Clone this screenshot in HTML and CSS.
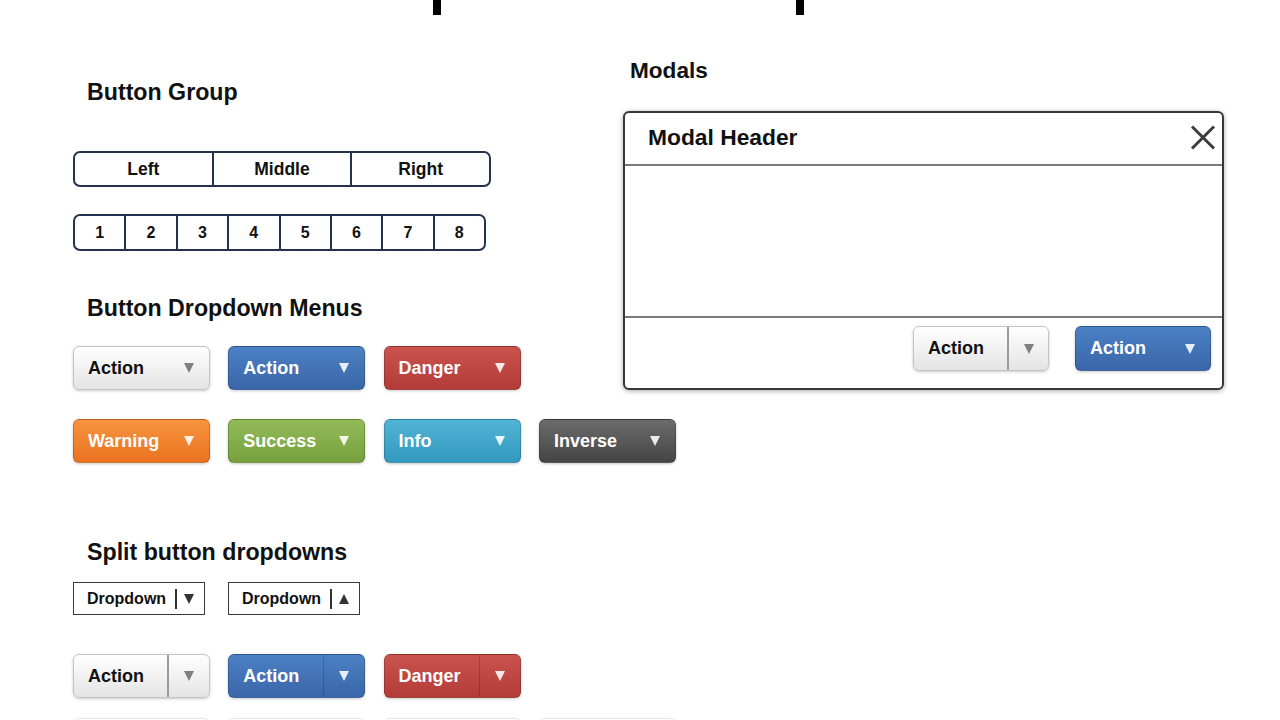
FILE: index.html
```html
<!DOCTYPE html>
<html>
<head>
<meta charset="utf-8">
<link rel="stylesheet" href="styles.css">
</head>
<body>
<div class="topbar"></div>
<div class="page">
  <div class="top">
    <div class="left">
      <h2 class="heading h-group">Button Group</h2>
      <div class="group group-lmr">
        <div class="seg">Left</div>
        <div class="seg">Middle</div>
        <div class="seg">Right</div>
      </div>
      <div class="group group-num">
        <div class="seg">1</div>
        <div class="seg">2</div>
        <div class="seg">3</div>
        <div class="seg">4</div>
        <div class="seg">5</div>
        <div class="seg">6</div>
        <div class="seg">7</div>
        <div class="seg">8</div>
      </div>
      <h2 class="heading h-menus">Button Dropdown Menus</h2>
      <div class="btn-row">
        <div class="btn default"><span>Action</span><i class="caret"></i></div>
        <div class="btn primary"><span>Action</span><i class="caret"></i></div>
        <div class="btn danger"><span>Danger</span><i class="caret"></i></div>
      </div>
    </div>
    <div class="right">
      <h2 class="heading h-modals">Modals</h2>
      <div class="modal">
        <div class="modal-header">
          <span class="modal-title">Modal Header</span>
          <svg class="close" width="26" height="25" viewBox="0 0 26 25"><path d="M2 1.5 L24 23.5 M24 1.5 L2 23.5" stroke="#3c3c3c" stroke-width="3" fill="none"/></svg>
        </div>
        <div class="modal-body"></div>
        <div class="modal-footer">
          <div class="btn default split"><span class="main">Action</span><span class="toggle"><i class="caret"></i></span></div>
          <div class="btn primary"><span>Action</span><i class="caret"></i></div>
        </div>
      </div>
    </div>
  </div>
  <div class="btn-row row2">
    <div class="btn warning"><span>Warning</span><i class="caret"></i></div>
    <div class="btn success"><span>Success</span><i class="caret"></i></div>
    <div class="btn info"><span>Info</span><i class="caret"></i></div>
    <div class="btn inverse"><span>Inverse</span><i class="caret"></i></div>
  </div>
  <h2 class="heading h-split">Split button dropdowns</h2>
  <div class="outline-row">
    <div class="outline"><span>Dropdown</span><span class="bar"></span><i class="caret dark"></i></div>
    <div class="outline"><span>Dropdown</span><span class="bar"></span><i class="caret dark up"></i></div>
  </div>
  <div class="btn-row row-split">
    <div class="btn default split"><span class="main">Action</span><span class="toggle"><i class="caret"></i></span></div>
    <div class="btn primary split"><span class="main">Action</span><span class="toggle"><i class="caret"></i></span></div>
    <div class="btn danger split"><span class="main">Danger</span><span class="toggle"><i class="caret"></i></span></div>
  </div>
  <div class="btn-row row-next">
    <div class="btn default"></div>
    <div class="btn default"></div>
    <div class="btn default"></div>
    <div class="btn default"></div>
  </div>
</div>
</body>
</html>
```
FILE: styles.css
```css
* { box-sizing: border-box; }
html, body { margin: 0; padding: 0; background: #fff; }
body {
  font-family: "Liberation Sans", Arial, sans-serif;
  color: #111;
  width: 1280px;
  height: 720px;
  overflow: hidden;
}
.topbar {
  margin-left: 433px;
  width: 371px;
  height: 15px;
  border-left: 8px solid #000;
  border-right: 8px solid #000;
}
.page { padding-left: 73px; }
.top { display: flex; }
.left { width: 550px; }
.right { width: 601px; }

.heading {
  margin: 0;
  font-size: 23.2px;
  font-weight: bold;
  line-height: 28px;
  height: 28px;
  color: #111;
  margin-left: 14px;
}
.h-group { margin-top: 63px; }
.h-menus { margin-top: 43px; }
.h-modals { margin-top: 42px; margin-left: 7px; font-size: 22.6px; }
.h-split { margin-top: 75px; }

.group {
  display: flex;
  border: 2px solid #24324d;
  border-radius: 7px;
  font-weight: bold;
  color: #111;
}
.group .seg {
  display: flex;
  align-items: center;
  justify-content: center;
  border-left: 2px solid #24324d;
}
.group .seg:first-child { border-left: none; }
.group-lmr { margin-top: 45px; width: 418px; height: 36px; font-size: 17.5px; }
.group-lmr .seg { flex: 1; }
.group-num { margin-top: 27px; width: 413px; height: 37px; font-size: 16px; }
.group-num .seg { flex: 1; }

.btn-row { display: flex; gap: 18.3px; }
.left .btn-row { margin-top: 24px; }
.row2 { margin-top: 29px; }
.row-split { margin-top: 39px; }
.row-next { margin-top: 20px; }

.btn {
  width: 137px;
  height: 44px;
  border-radius: 6px;
  display: flex;
  align-items: center;
  justify-content: space-between;
  padding: 0 15px 0 14px;
  font-size: 18px;
  font-weight: bold;
  color: #fff;
  border: 1px solid rgba(0,0,0,0.18);
  box-shadow: 0 1px 3px rgba(0,0,0,0.22);
}
.btn .caret {
  display: block;
  width: 0; height: 0;
  border-left: 5.5px solid transparent;
  border-right: 5.5px solid transparent;
  border-top: 10px solid rgba(255,255,255,0.88);
}
.default { background: linear-gradient(#ffffff, #e4e4e4); color: #111; border-color: #c4c4c4; }
.default .caret { border-top-color: #808080; }
.primary { background: linear-gradient(#4c80c5, #3a66a9); }
.danger { background: linear-gradient(#ca534f, #b33b38); }
.warning { background: linear-gradient(#f8943f, #ea7220); }
.success { background: linear-gradient(#93ba59, #76a13d); }
.info { background: linear-gradient(#52b4d4, #3399c0); }
.inverse { background: linear-gradient(#6b6b6b, #454545); }

.btn.split { padding: 0; justify-content: flex-start; }
.btn.split .main { width: 95px; padding-left: 14px; height: 100%; display: flex; align-items: center; border-right: 1px solid rgba(0,0,0,0.18); }
.btn.default.split .main { border-right: 2px solid #9a9a9a; }
.btn.split .toggle { flex: 1; height: 100%; display: flex; align-items: center; justify-content: center; }

.row-next .btn { box-shadow: 0 1px 3px rgba(0,0,0,0.12); border-color: #e8e8e8; }

.outline-row { display: flex; gap: 23px; margin-top: 16px; }
.outline {
  width: 132px;
  height: 33px;
  border: 1.5px solid #3a3a3a;
  display: flex;
  align-items: center;
  padding-left: 13px;
  font-size: 16px;
  font-weight: bold;
  color: #111;
}
.outline .bar {
  width: 1.5px;
  height: 20px;
  background: #333;
  margin-left: 9px;
  margin-right: 7px;
}
.outline .caret {
  display: block;
  width: 0; height: 0;
  border-left: 5.5px solid transparent;
  border-right: 5.5px solid transparent;
  border-top: 10px solid #333;
}
.outline .caret.up { border-top: none; border-bottom: 10px solid #333; }

.modal {
  margin-top: 26px;
  width: 601px;
  height: 279px;
  border: 2px solid #383838;
  border-radius: 6px;
  box-shadow: 0 1px 5px rgba(0,0,0,0.35);
  display: flex;
  flex-direction: column;
  background: #fff;
}
.modal-header {
  height: 53px;
  border-bottom: 2px solid #7a7a7a;
  display: flex;
  align-items: center;
  justify-content: space-between;
  padding: 0 6px 3px 23px;
}
.modal-title { font-size: 22.8px; font-weight: bold; color: #111; }
.close { display: block; }
.modal-body { height: 150px; }
.modal-footer {
  flex: 1;
  border-top: 2px solid #7a7a7a;
  display: flex;
  justify-content: flex-end;
  align-items: flex-start;
  gap: 26px;
  padding: 8px 11px 0 0;
}
.modal-footer .btn { width: 136px; height: 45px; }
```
